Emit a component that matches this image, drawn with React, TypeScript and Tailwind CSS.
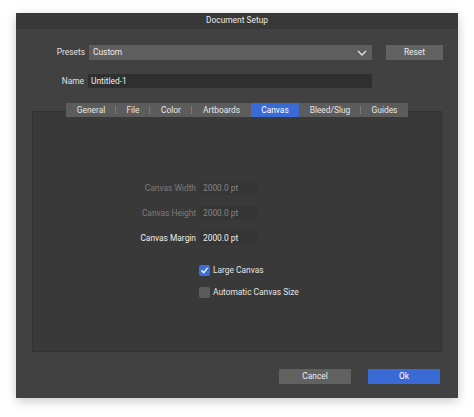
import React from "react";

const tabs = [
  { name: "General", w: 50 },
  { name: "File", w: 34 },
  { name: "Color", w: 42 },
  { name: "Artboards", w: 59 },
  { name: "Canvas", w: 48 },
  { name: "Bleed/Slug", w: 62 },
  { name: "Guides", w: 47 },
];

const fields = [
  { label: "Canvas Width", value: "2000.0 pt", enabled: false },
  { label: "Canvas Height", value: "2000.0 pt", enabled: false },
  { label: "Canvas Margin", value: "2000.0 pt", enabled: true },
];

function Check({ checked, label }: { checked: boolean; label: string }) {
  return (
    <div className="flex items-center h-[12px] ml-[166px]">
      <div
        className={
          "w-[11px] h-[11px] rounded-[2px] flex items-center justify-center " +
          (checked ? "bg-[#3d6fd9]" : "bg-[#5c5c5c]")
        }
      >
        {checked && (
          <svg width="9" height="9" viewBox="0 0 10 10">
            <path d="M2 5.2 L4.2 7.4 L8 2.6" fill="none" stroke="#fff" strokeWidth="1.5" strokeLinecap="round" strokeLinejoin="round" />
          </svg>
        )}
      </div>
      <span className="ml-[3px] text-[#e4e4e4]">{label}</span>
    </div>
  );
}

export default function App() {
  return (
    <div
      className="w-[474px] h-[417px] bg-white pt-[13px] pl-[16px] text-[8.4px] leading-none"
      style={{ fontFamily: "Roboto, 'Liberation Sans', sans-serif" }}
    >
      <div className="w-[442px] h-[385px] bg-[#414141] flex flex-col shadow-[0_3px_10px_rgba(0,0,0,0.22)]">
        <div className="h-[16px] bg-[#383838] flex items-center justify-center text-[#e8e8e8] border-b border-[#363636]">
          Document Setup
        </div>

        <div className="flex items-center h-[15px] mt-[16px]">
          <span className="w-[69px] text-right text-[#e0e0e0]">Presets</span>
          <div className="ml-[4px] w-[283px] h-full bg-[#5e5e5e] flex items-center justify-between px-[4px] text-[#ececec]">
            <span>Custom</span>
            <svg width="10" height="6" viewBox="0 0 10 6" className="mr-[1px]">
              <path d="M1 1 L5 5 L9 1" fill="none" stroke="#e6e6e6" strokeWidth="1.3" />
            </svg>
          </div>
          <div className="ml-[14px] w-[57px] h-full bg-[#626262] flex items-center justify-center text-[#ececec]">
            Reset
          </div>
        </div>

        <div className="flex items-center h-[14px] mt-[14px]">
          <span className="w-[68px] text-right text-[#e0e0e0]">Name</span>
          <div className="ml-[4px] w-[284px] h-full bg-[#2f2f2f] flex items-center px-[3px] text-[#ececec]">
            Untitled-1
          </div>
        </div>

        <div className="flex h-[14px] mt-[15px] ml-[50px] relative z-10">
          {tabs.map((t, i) => {
            const sel = t.name === "Canvas";
            const nextSel = tabs[i + 1]?.name === "Canvas";
            const showSep = !sel && !nextSel && i < tabs.length - 1;
            return (
              <div
                key={t.name}
                style={{ width: t.w }}
                className={
                  "h-full flex items-center justify-center relative " +
                  (sel ? "bg-[#3a6ad6] text-white" : "bg-[#5c5c5c] text-[#e6e6e6]")
                }
              >
                {t.name}
                {showSep && <div className="absolute right-0 top-[3px] h-[8px] w-px bg-[#7a7a7a]" />}
              </div>
            );
          })}
        </div>

        <div className="-mt-[6px] ml-[16px] w-[410px] h-[241px] bg-[#393939] border border-[#333333] pt-[69px]">
          <div className="flex flex-col gap-[11px]">
            {fields.map((f) => (
              <div key={f.label} className="flex items-center h-[14px]">
                <span className={"w-[163px] text-right " + (f.enabled ? "text-[#ececec]" : "text-[#7b7b7b]")}>
                  {f.label}
                </span>
                <div
                  className={
                    "ml-[4px] w-[57px] h-full bg-[#353535] flex items-center px-[3px] " +
                    (f.enabled ? "text-[#f0f0f0]" : "text-[#858585]")
                  }
                >
                  {f.value}
                </div>
              </div>
            ))}
          </div>
          <div className="mt-[19px] flex flex-col gap-[10px]">
            <Check checked label="Large Canvas" />
            <Check checked={false} label="Automatic Canvas Size" />
          </div>
        </div>

        <div className="flex justify-end mt-[17px] pr-[18px] gap-[17px]">
          <div className="w-[72px] h-[15px] bg-[#626262] flex items-center justify-center text-[#ececec]">Cancel</div>
          <div className="w-[72px] h-[15px] bg-[#3a6ad6] flex items-center justify-center text-white">Ok</div>
        </div>
      </div>
    </div>
  );
}
